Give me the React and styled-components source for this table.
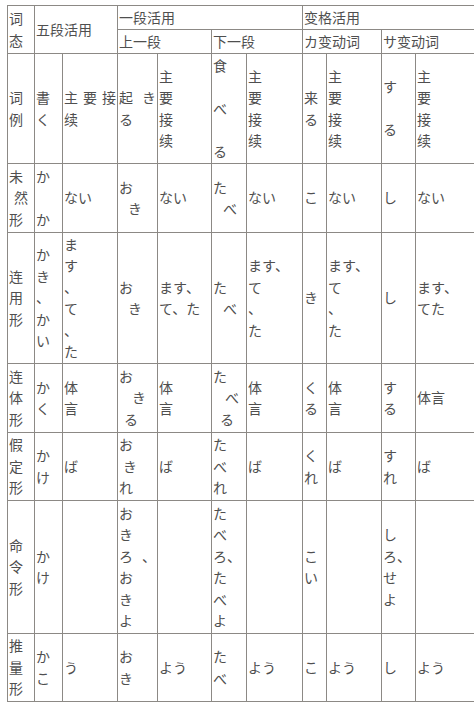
import React from "react";
import styled, { createGlobalStyle } from "styled-components";

const GlobalStyle = createGlobalStyle`
  html, body {
    margin: 0;
    padding: 0;
    background: #ffffff;
  }
  body {
    width: 474px;
    height: 708px;
    overflow: hidden;
    font-family: "Noto Sans CJK SC", "Noto Sans CJK JP", sans-serif;
  }
`;

const Page = styled.div`
  padding: 5px 0 0 7px;
  width: 474px;
  overflow: hidden;
  box-sizing: border-box;
`;

const Table = styled.table`
  border-collapse: collapse;
  table-layout: fixed;
  width: 538px;
  color: #4f4f4f;
  font-size: 14px;
  line-height: 21.5px;
`;

const Row = styled.tr`
  height: ${(p) => p.$h}px;
`;

const Cell = styled.td`
  border: 1px solid #8c8985;
  padding: 0 1px;
  text-align: left;
  vertical-align: middle;
  font-weight: normal;
  overflow: hidden;
  white-space: nowrap;
`;

const HeadCell = styled(Cell).attrs({ as: "th" })``;

const Line = styled.div`
  padding-left: ${(p) => p.$indent || 0}px;
  text-align: ${(p) => (p.$spread ? "justify" : "left")};
  text-align-last: ${(p) => (p.$spread ? "justify" : "auto")};
  min-height: 21.5px;
`;

const widths = [27, 28, 55, 40, 54, 35, 56, 24, 55, 34, 130];

// a line: plain string, [indent, text] or { s: text } for a spread line
const L = (i, t) => [i, t];
const S = (t) => ({ s: t });
const STACK = ["主", "要", "接", "续"];

const body = [
  {
    h: 110,
    cells: [
      ["词", "例"],
      ["書", "く"],
      [S("主要接"), "续"],
      [S("起き"), "る"],
      STACK,
      ["食", "", "べ", "", "る"],
      STACK,
      ["来", "る"],
      STACK,
      ["す", "", "る"],
      STACK,
    ],
  },
  {
    h: 69,
    cells: [
      ["未", L(5, "然"), "形"],
      ["か", "", "か"],
      ["ない"],
      ["お", L(9, "き")],
      ["ない"],
      ["た", L(10, "べ")],
      ["ない"],
      ["こ"],
      ["ない"],
      ["し"],
      ["ない"],
    ],
  },
  {
    h: 131,
    cells: [
      ["连", "用", "形"],
      ["か", "き", "、", "か", "い"],
      ["ま", "す", "、", "て", "、", "た"],
      ["お", L(9, "き")],
      ["ます、", "て、た"],
      ["た", L(10, "べ")],
      ["ます、", "て", "、", "た"],
      ["き"],
      ["ます、", "て", "、", "た"],
      ["し"],
      ["ます、", "てた"],
    ],
  },
  {
    h: 69,
    cells: [
      ["连", "体", "形"],
      ["か", "く"],
      ["体", "言"],
      ["お", L(13, "き"), L(5, "る")],
      ["体", "言"],
      ["た", L(12, "べ"), L(7, "る")],
      ["体", "言"],
      ["く", "る"],
      ["体", "言"],
      ["す", "る"],
      ["体言"],
    ],
  },
  {
    h: 68,
    cells: [
      ["假", "定", "形"],
      ["か", "け"],
      ["ば"],
      ["お", L(4, "き"), "れ"],
      ["ば"],
      ["た", "べ", "れ"],
      ["ば"],
      ["く", "れ"],
      ["ば"],
      ["す", "れ"],
      ["ば"],
    ],
  },
  {
    h: 133,
    cells: [
      ["命", "令", "形"],
      ["か", "け"],
      [],
      ["お", "き", S("ろ、"), "お", "き", "よ"],
      [],
      ["た", "べ", "ろ、", "た", "べ", "よ"],
      [],
      ["こ", "い"],
      [],
      ["し", "ろ、", "せ", "よ"],
      [],
    ],
  },
  {
    h: 68,
    cells: [
      ["推", "量", "形"],
      ["か", "こ"],
      ["う"],
      ["お", "き"],
      ["よう"],
      ["た", "べ"],
      ["よう"],
      ["こ"],
      ["よう"],
      ["し"],
      ["よう"],
    ],
  },
];

const Lines = ({ items }) =>
  items.map((it, k) => {
    if (Array.isArray(it)) {
      return (
        <Line key={k} $indent={it[0]}>
          {it[1]}
        </Line>
      );
    }
    if (it && typeof it === "object") {
      return (
        <Line key={k} $spread>
          {it.s.split("").join(" ")}
        </Line>
      );
    }
    return <Line key={k}>{it || "\u00a0"}</Line>;
  });

export default function App() {
  return (
    <Page>
      <GlobalStyle />
      <Table>
        <colgroup>
          {widths.map((w, i) => (
            <col key={i} style={{ width: w }} />
          ))}
        </colgroup>
        <thead>
          <Row $h={24}>
            <HeadCell rowSpan={2}>
              <Lines items={["词", "态"]} />
            </HeadCell>
            <HeadCell rowSpan={2} colSpan={2}>
              五段活用
            </HeadCell>
            <HeadCell colSpan={4}>一段活用</HeadCell>
            <HeadCell colSpan={4}>变格活用</HeadCell>
          </Row>
          <Row $h={24}>
            <HeadCell colSpan={2}>上一段</HeadCell>
            <HeadCell colSpan={2}>下一段</HeadCell>
            <HeadCell colSpan={2}>カ变动词</HeadCell>
            <HeadCell colSpan={2}>サ变动词</HeadCell>
          </Row>
        </thead>
        <tbody>
          {body.map((row, r) => (
            <Row key={r} $h={row.h}>
              {row.cells.map((c, i) => (
                <Cell key={i}>
                  <Lines items={c} />
                </Cell>
              ))}
            </Row>
          ))}
        </tbody>
      </Table>
    </Page>
  );
}
